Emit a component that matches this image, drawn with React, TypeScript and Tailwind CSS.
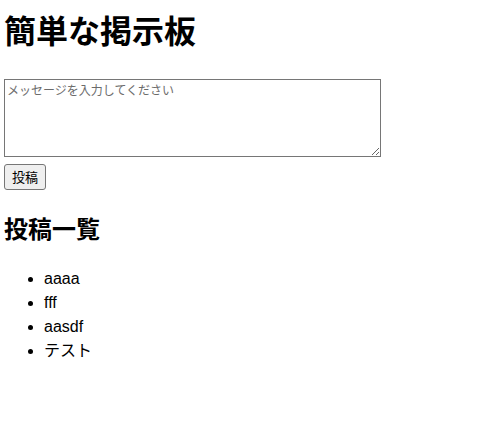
import { useState } from "react";

const posts = ["aaaa", "fff", "aasdf", "テスト"];

export default function App() {
  const [message, setMessage] = useState("");

  return (
    <div className="min-h-screen bg-white px-1 pt-[14px] text-black [font-family:'Liberation_Sans','Noto_Sans_CJK_JP',sans-serif]">
      <h1 className="text-[32px] font-bold leading-[37px]">簡単な掲示板</h1>

      <form className="mt-[28px] flex flex-col items-start" onSubmit={(e) => e.preventDefault()}>
        <textarea
          value={message}
          onChange={(e) => setMessage(e.target.value)}
          placeholder="メッセージを入力してください"
          className="block h-[78px] w-[377px] resize border border-[#767676] px-[2px] pb-[2px] pt-[4px] text-[12px] leading-[15px] placeholder:text-[#6b6b6b]"
        />
        <button
          type="submit"
          className="mt-[7px] h-[26px] w-[42px] rounded-[3px] border border-[#767676] bg-[#efefef] text-[13px] leading-none"
        >
          投稿
        </button>
      </form>

      <h2 className="mt-[26px] text-[24px] font-bold leading-[28px]">投稿一覧</h2>

      <ul className="mt-[23px] list-disc pl-10 text-[16px] leading-[24px]">
        {posts.map((post) => (
          <li key={post}>{post}</li>
        ))}
      </ul>
    </div>
  );
}
